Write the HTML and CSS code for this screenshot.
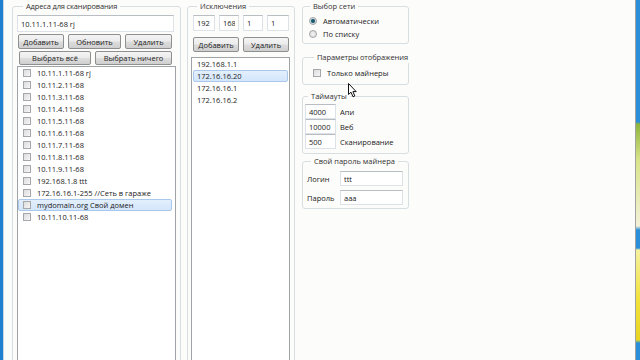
FILE: index.html
```html
<!DOCTYPE html>
<html lang="ru">
<head>
  <meta charset="UTF-8" />
  <title>Сканер</title>
  <link rel="stylesheet" href="styles.css">
</head>
<body>

  <div class="desktop">
    <div class="edge-left"></div>

    <div class="window">

      <fieldset class="group group-scan">
        <legend>Адреса для сканирования</legend>
        <input class="text scan-input" value="10.11.1.11-68 rj">
        <div class="btn-row row-one">
          <button class="btn w-add">Добавить</button>
          <button class="btn w-refresh">Обновить</button>
          <button class="btn w-del">Удалить</button>
        </div>
        <div class="btn-row row-two">
          <button class="btn w-all">Выбрать всё</button>
          <button class="btn w-none">Выбрать ничего</button>
        </div>
        <div class="list list-scan">
          <div class="item"><span class="check"></span>10.11.1.11-68 rj</div>
          <div class="item"><span class="check"></span>10.11.2.11-68</div>
          <div class="item"><span class="check"></span>10.11.3.11-68</div>
          <div class="item"><span class="check"></span>10.11.4.11-68</div>
          <div class="item"><span class="check"></span>10.11.5.11-68</div>
          <div class="item"><span class="check"></span>10.11.6.11-68</div>
          <div class="item"><span class="check"></span>10.11.7.11-68</div>
          <div class="item"><span class="check"></span>10.11.8.11-68</div>
          <div class="item"><span class="check"></span>10.11.9.11-68</div>
          <div class="item"><span class="check"></span>192.168.1.8 ttt</div>
          <div class="item"><span class="check"></span>172.16.16.1-255 //Сеть в гараже</div>
          <div class="item selected"><span class="check"></span>mydomain.org Свой домен</div>
          <div class="item"><span class="check"></span>10.11.10.11-68</div>
        </div>
      </fieldset>

      <fieldset class="group group-except">
        <legend>Исключения</legend>
        <div class="octets">
          <input class="text octet wide" value="192">
          <input class="text octet" value="168">
          <input class="text octet" value="1">
          <input class="text octet wide" value="1">
        </div>
        <div class="btn-row row-except">
          <button class="btn w-half">Добавить</button>
          <button class="btn w-half">Удалить</button>
        </div>
        <div class="list list-except">
          <div class="item plain">192.168.1.1</div>
          <div class="item plain selected">172.16.16.20</div>
          <div class="item plain">172.16.16.1</div>
          <div class="item plain">172.16.16.2</div>
        </div>
      </fieldset>

      <div class="side">
        <fieldset class="group group-net">
          <legend>Выбор сети</legend>
          <label class="option"><span class="radio checked"></span>Автоматически</label>
          <label class="option"><span class="radio"></span>По списку</label>
        </fieldset>

        <fieldset class="group group-view">
          <legend>Параметры отображения</legend>
          <label class="option"><span class="check"></span>Только майнеры</label>
        </fieldset>

        <fieldset class="group group-timeout">
          <legend>Таймауты</legend>
          <div class="field"><input class="text small" value="4000"><span>Апи</span></div>
          <div class="field"><input class="text small" value="10000"><span>Веб</span></div>
          <div class="field"><input class="text small" value="500"><span>Сканирование</span></div>
        </fieldset>

        <fieldset class="group group-login">
          <legend>Свой пароль майнера</legend>
          <div class="field"><span class="caption">Логин</span><input class="text login" value="ttt"></div>
          <div class="field"><span class="caption">Пароль</span><input class="text login" value="aaa"></div>
        </fieldset>
      </div>

      <svg class="cursor" width="10" height="15" viewBox="0 0 10 15">
        <path d="M0.5 0.5 L0.5 11.5 L3 9.2 L5 13.8 L6.8 13 L4.9 8.6 L8.2 8.6 Z" />
      </svg>
    </div>

    <div class="edge-right"></div>
  </div>

</body>
</html>
```

FILE: styles.css
```css
html, body {
  margin: 0;
  padding: 0;
  width: 640px;
  height: 360px;
  overflow: hidden;
  background: #1f7fcf;
  font-family: 'Open Sans', 'Noto Sans', sans-serif;
  font-size: 7.5px;
  color: #222;
}

.desktop {
  display: flex;
  height: 360px;
}

.edge-left {
  width: 3px;
  background: #1f80d0;
}

.edge-right {
  width: 4px;
  background: linear-gradient(#2a8fd8 0, #2a8fd8 122px, #8db43c 124px, #d9e48a 160px, #f4f1d8 226px, #2a8fd8 230px, #2a8fd8 248px, #f6f1a0 250px, #f2e23a 300px, #e8d420 340px, #2a8fd8 343px);
}

.window {
  position: relative;
  flex: 1;
  display: flex;
  align-items: flex-start;
  padding: 1px 0 0 8px;
  background: #fcfcfa;
  border-left: 1px solid #c9d6e2;
  border-right: 1px solid #a2a2a2;
  overflow: hidden;
}

/* group boxes */
.group {
  margin: 0;
  border: 1px solid #d8dde2;
  border-radius: 3px;
  padding: 3px 4px 4px;
  min-width: 0;
  box-sizing: border-box;
}

.group legend {
  padding: 0 3px;
  margin-left: 6px;
  line-height: 11px;
  color: #333;
  white-space: nowrap;
}

.group-scan {
  width: 169px;
  height: 420px;
}

.group-scan legend {
  letter-spacing: -0.15px;
}

.group-except {
  width: 108px;
  height: 420px;
  margin-left: 6px;
}

.group-except legend {
  margin-left: 5px;
}

/* inputs and buttons */
.text {
  display: block;
  margin: 0;
  box-sizing: border-box;
  font: inherit;
  color: #222;
  background: #fff;
  border: 1px solid #dde2e8;
  border-top-color: #b9bdc4;
  padding: 0 3px;
  outline: none;
}

.scan-input {
  width: 157px;
  height: 17px;
}

.btn {
  margin: 0;
  padding: 0;
  font: inherit;
  color: #222;
  box-sizing: border-box;
  border: 1px solid #8e8f8f;
  border-radius: 2px;
  background: linear-gradient(#f4f4f4, #ebebeb 48%, #dddddd 52%, #cfcfcf);
}

.btn-row {
  display: flex;
  justify-content: space-between;
}

.row-one {
  margin: 2px 4px 0 1px;
}

.row-one .btn {
  height: 15px;
}

.row-two {
  margin: 2px 4px 0 2px;
}

.row-two .btn {
  height: 14px;
}

.w-add { width: 46px; }
.w-refresh { width: 53px; }
.w-del { width: 47px; }
.w-all { width: 72px; }
.w-none { width: 77px; }
.w-half { width: 46px; }

/* list boxes */
.list {
  margin-top: 1px;
  height: 400px;
  background: #fff;
  border: 1px solid #9fa3a8;
  box-sizing: border-box;
}

.list-except {
  margin: 5px 0 0 -1px;
}

.item {
  display: flex;
  align-items: center;
  height: 12px;
  padding-left: 4px;
  white-space: nowrap;
  border: 1px solid transparent;
  box-sizing: border-box;
  margin-right: 3px;
}

.item.plain {
  padding-left: 3px;
  margin: 0 1px;
}

.item.selected {
  background: linear-gradient(#e3effc, #d3e6fb);
  border-color: #a9c8ec;
  border-radius: 2px;
}

.check {
  display: inline-block;
  width: 6px;
  height: 6px;
  margin-right: 6px;
  border: 1px solid #a5a7aa;
  background: linear-gradient(135deg, #dcdcdc, #f6f6f6);
}

.octets {
  display: flex;
  gap: 4px;
  margin-left: 1px;
}

.octet {
  width: 20px;
  height: 16px;
}

.octet.wide {
  width: 22px;
}

.row-except {
  margin: 6px 1px 0 1px;
}

.row-except .btn {
  height: 15px;
}

/* right column */
.side {
  display: flex;
  flex-direction: column;
  width: 107px;
  margin-left: 7px;
}

.side .group {
  padding: 2px 4px 3px 6px;
}

.group-net legend {
  margin-left: 1px;
}

.option {
  display: flex;
  align-items: center;
  height: 13px;
}

.radio {
  display: inline-block;
  width: 6px;
  height: 6px;
  margin-right: 6px;
  border: 1px solid #a0a4a8;
  border-radius: 50%;
  background: radial-gradient(#f4f4f4, #d8d8d8);
}

.radio.checked {
  background: radial-gradient(#1f4a5c 0, #2a6a80 40%, #d0dde3 60%, #eef2f4 100%);
}

.group-view {
  margin-top: 8px;
}

.side .group-view {
  padding: 3px 4px 5px 10px;
}

.group-view legend {
  margin-left: 1px;
  letter-spacing: -0.1px;
}

.group-timeout {
  margin-top: 6px;
}

.group-timeout legend {
  margin-left: 3px;
}

.side .group-timeout {
  padding: 2px 4px 4px 2px;
}

.field {
  display: flex;
  align-items: center;
}

.small {
  width: 31px;
  height: 15px;
  margin-right: 4px;
}

.group-login {
  margin-top: 2px;
}

.group-login legend {
  margin-left: 4px;
}

.side .group-login {
  padding: 4px 4px 3px 4px;
}

.group-login .field + .field {
  margin-top: 4px;
}

.caption {
  width: 33px;
}

.login {
  width: 63px;
  height: 15px;
}

.cursor {
  position: absolute;
  left: 344px;
  top: 83px;
  fill: #fff;
  stroke: #111;
  stroke-width: 1;
  stroke-linejoin: round;
}
```
